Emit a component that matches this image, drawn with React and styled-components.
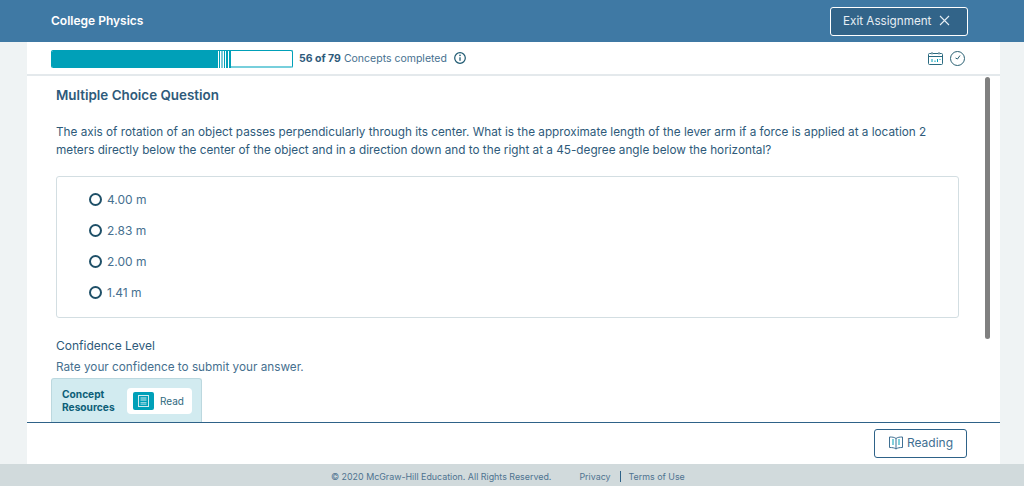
import React from "react";
import styled, { createGlobalStyle } from "styled-components";

const Global = createGlobalStyle`
  html, body { margin: 0; padding: 0; height: 100%; overflow: hidden; }
  body { font-family: "Inter", "Lato", sans-serif; background: #eff3f4; color: #2e5a7a; }
  * { box-sizing: border-box; }
`;

const Page = styled.div`
  width: 1024px;
  height: 486px;
  display: flex;
  flex-direction: column;
`;

const Header = styled.header`
  height: 42px;
  flex: none;
  background: #3f79a4;
  display: flex;
  align-items: center;
  justify-content: space-between;
  padding: 0 56px 0 51px;
`;

const CourseTitle = styled.div`
  color: #fff;
  font-size: 12px;
  font-weight: 600;
  margin-top: -2px;
`;

const ExitButton = styled.button`
  width: 138px;
  height: 29px;
  background: #326489;
  border: 1px solid #fff;
  border-radius: 3px;
  color: #e6eef4;
  font: 400 11.7px "Inter", sans-serif;
  display: flex;
  align-items: center;
  gap: 8px;
  padding: 0 0 1px 12px;
`;

const Sheet = styled.div`
  flex: 1;
  min-height: 0;
  margin: 0 24px 0 27px;
  background: #fff;
  display: flex;
  flex-direction: column;
`;

const ProgressRow = styled.div`
  height: 34px;
  flex: none;
  border-bottom: 2px solid #e4e9ec;
  display: flex;
  align-items: center;
  padding: 0 35px 0 24px;
`;

const Track = styled.div`
  width: 242px;
  height: 18px;
  margin-top: 1px;
  border: 1px solid #00a0b8;
  border-bottom: none;
  border-radius: 2px;
  display: flex;
  overflow: hidden;
  background: #fff;
`;

const Fill = styled.div`
  background: ${(p) => p.$color};
`;

const TrackRest = styled.div`
  flex: 1;
  border-bottom: 2px solid #77cfdc;
`;

const ProgressText = styled.div`
  margin-left: 6px;
  font-size: 10.5px;
  color: #46708f;
  b { color: #2e5a7a; font-weight: 700; }
`;

const InfoWrap = styled.span`
  margin-left: 7px;
  display: flex;
  color: #1f5a72;
`;

const Tools = styled.div`
  margin-left: auto;
  display: flex;
  align-items: center;
  gap: 7px;
`;

const Main = styled.main`
  flex: 1;
  min-height: 0;
  position: relative;
  overflow: hidden;
  padding: 10px 41px 0 24px;
  display: flex;
  flex-direction: column;
`;

const Scrollbar = styled.div`
  position: absolute;
  right: 10px;
  top: 1px;
  width: 5px;
  height: 262px;
  border-radius: 3px;
  background: #808080;
`;

const QuestionTitle = styled.h1`
  margin: 0 0 0 5px;
  font-size: 13.4px;
  line-height: 18px;
  font-weight: 600;
  color: #2e5a7a;
`;

const Prompt = styled.p`
  margin: 19px 0 0 5px;
  font-size: 11.75px;
  line-height: 18px;
  color: #2e5a7a;
`;

const Choices = styled.div`
  margin: 17px 0 0 5px;
  height: 142px;
  flex: none;
  border: 1px solid #d3dee2;
  border-radius: 3px;
  padding: 7px 0 0 32px;
  display: flex;
  flex-direction: column;
`;

const Choice = styled.label`
  height: 31px;
  flex: none;
  display: flex;
  align-items: center;
  gap: 5px;
  font-size: 12px;
  color: #46708f;
`;

const Radio = styled.span`
  width: 13px;
  height: 13px;
  border: 2px solid #1f5068;
  border-radius: 50%;
  flex: none;
`;

const ConfidenceTitle = styled.div`
  margin: 20px 0 0 5px;
  font-size: 12px;
  line-height: 16px;
  color: #2e5a7a;
`;

const ConfidenceHint = styled.div`
  margin: 5px 0 0 5px;
  font-size: 11.75px;
  line-height: 16px;
  color: #46708f;
`;

const ResourceTab = styled.div`
  margin-top: 3px;
  width: 151px;
  height: 44px;
  flex: none;
  background: #d2ebf0;
  border: 1px solid #bcd8df;
  border-bottom: none;
  border-radius: 3px 3px 0 0;
  display: flex;
  align-items: center;
  padding: 0 9px 0 10px;
  justify-content: space-between;
`;

const ResourceLabel = styled.div`
  font-size: 10.2px;
  line-height: 13px;
  font-weight: 700;
  color: #0e5f78;
`;

const ReadButton = styled.div`
  width: 65px;
  height: 26px;
  background: #fff;
  border-radius: 4px;
  display: flex;
  align-items: center;
  gap: 6px;
  padding-left: 6px;
  font-size: 10px;
  color: #2e6a80;
`;

const ReadIcon = styled.span`
  width: 21px;
  height: 18px;
  background: #00a0b8;
  border-radius: 2px;
  display: flex;
  align-items: center;
  justify-content: center;
`;

const BottomBar = styled.div`
  height: 42px;
  flex: none;
  border-top: 1px solid #2e6288;
  display: flex;
  align-items: center;
  justify-content: flex-end;
  padding: 0 33px 0 0;
`;

const ReadingButton = styled.button`
  width: 93px;
  height: 29px;
  background: #fff;
  border: 1px solid #2e6288;
  border-radius: 3px;
  color: #3f6f92;
  font: 400 12px "Inter", sans-serif;
  display: flex;
  align-items: center;
  justify-content: center;
  gap: 3px;
  padding: 0 0 2px;
`;

const Footer = styled.footer`
  height: 22px;
  flex: none;
  background: #d1dadc;
  display: flex;
  align-items: center;
  padding: 3px 0 0 331px;
  font-size: 8.9px;
  color: #4f7390;
`;

const FooterLinks = styled.div`
  margin-left: 28px;
  display: flex;
  align-items: center;
`;

const Divider = styled.span`
  width: 1px;
  height: 11px;
  margin: 0 8px 0 9px;
  background: #2e6288;
`;

const segments = [
  [166, "#00a0b8"], [1, "#fff"], [1, "#00a0b8"], [1, "#fff"], [2, "#7cc9d6"],
  [1, "#fff"], [1, "#00a0b8"], [1, "#fff"], [2, "#00a0b8"], [1, "#fff"], [2, "#00a0b8"],
];

const choices = ["4.00 m", "2.83 m", "2.00 m", "1.41 m"];

function CalendarIcon() {
  return (
    <svg width="15" height="14" viewBox="0 0 15 14" fill="none">
      <rect x="0.5" y="2.5" width="14" height="11" rx="1" stroke="#2a6a80" />
      <path d="M1 5.5h13" stroke="#2a6a80" />
      <path d="M4 1v2.500M11 1v2.500" stroke="#8aa5b0" strokeWidth="1.5" />
      <path d="M4 8v3M7 9.500v1.500M9.500 8v3M12 8v1" stroke="#00a0b8" />
    </svg>
  );
}

function ClockIcon() {
  return (
    <svg width="15" height="15" viewBox="0 0 15 15" fill="none">
      <circle cx="7.5" cy="7.5" r="7" stroke="#2a6072" />
      <path d="M5.500 7l2 1 2.500-3.500" stroke="#2a6072" />
    </svg>
  );
}

function InfoIcon() {
  return (
    <svg width="12" height="12" viewBox="0 0 12 12" fill="none">
      <circle cx="6" cy="6" r="5.300" stroke="currentColor" strokeWidth="1.2" />
      <path d="M6 5.200v3.600" stroke="currentColor" strokeWidth="1.3" />
      <circle cx="6" cy="3.400" r="0.8" fill="currentColor" />
    </svg>
  );
}

function CloseIcon() {
  return (
    <svg width="11" height="11" viewBox="0 0 11 11" fill="none">
      <path d="M1 1l9 9M10 1l-9 9" stroke="#e6eef4" strokeWidth="1.1" />
    </svg>
  );
}

function PageIcon() {
  return (
    <svg width="11" height="12" viewBox="0 0 11 12" fill="none">
      <rect x="0.5" y="0.5" width="10" height="11" stroke="#d2ebf0" />
      <path d="M2.500 3h6M2.500 5h6" stroke="#d2ebf0" />
      <path d="M2.500 7.500h6M2.500 9.200h6" stroke="#8fd2de" strokeWidth="1.2" />
    </svg>
  );
}

function BookIcon() {
  return (
    <svg width="16" height="14" viewBox="0 0 16 14" fill="none">
      <path d="M8 2.500C6.500 1.200 4 1 1.500 1v10.500c2.500 0 5 .2 6.500 1.500 1.500-1.300 4-1.500 6.500-1.500V1C12 1 9.500 1.200 8 2.500zM8 2.500V13" stroke="#3f6f92" />
      <path d="M4 4h2M4 6h2M4 8h2M10 4h2M10 6h2M10 8h2" stroke="#00a0b8" />
    </svg>
  );
}

export default function App() {
  return (
    <Page>
      <Global />
      <Header>
        <CourseTitle>College Physics</CourseTitle>
        <ExitButton>
          Exit Assignment <CloseIcon />
        </ExitButton>
      </Header>
      <Sheet>
        <ProgressRow>
          <Track>
            {segments.map(([w, color], i) => (
              <Fill key={i} $color={color} style={{ width: w }} />
            ))}
            <TrackRest />
          </Track>
          <ProgressText>
            <b>56 of 79</b> Concepts completed
          </ProgressText>
          <InfoWrap>
            <InfoIcon />
          </InfoWrap>
          <Tools>
            <CalendarIcon />
            <ClockIcon />
          </Tools>
        </ProgressRow>
        <Main>
          <Scrollbar />
          <QuestionTitle>Multiple Choice Question</QuestionTitle>
          <Prompt>
            The axis of rotation of an object passes perpendicularly through its center. What is the approximate length of the lever arm if a force is applied at a location 2 meters directly below the center of the object and in a direction down and to the right at a 45-degree angle below the horizontal?
          </Prompt>
          <Choices>
            {choices.map((c) => (
              <Choice key={c}>
                <Radio />
                {c}
              </Choice>
            ))}
          </Choices>
          <ConfidenceTitle>Confidence Level</ConfidenceTitle>
          <ConfidenceHint>Rate your confidence to submit your answer.</ConfidenceHint>
          <ResourceTab>
            <ResourceLabel>
              Concept
              <br />
              Resources
            </ResourceLabel>
            <ReadButton>
              <ReadIcon>
                <PageIcon />
              </ReadIcon>
              Read
            </ReadButton>
          </ResourceTab>
        </Main>
        <BottomBar>
          <ReadingButton>
            <BookIcon /> Reading
          </ReadingButton>
        </BottomBar>
      </Sheet>
      <Footer>
        © 2020 McGraw-Hill Education. All Rights Reserved.
        <FooterLinks>
          Privacy
          <Divider />
          Terms of Use
        </FooterLinks>
      </Footer>
    </Page>
  );
}
